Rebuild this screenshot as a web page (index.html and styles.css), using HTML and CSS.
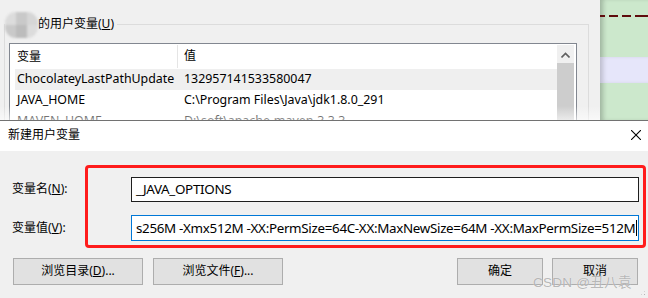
FILE: index.html
```html
<!DOCTYPE html>
<html>
<head>
	<meta charset="utf-8">
	<title>新建用户变量</title>
	<link rel="stylesheet" href="styles.css">
</head>
<body>
	<div class="back">
		<div class="envwin">
			<div class="group">
				<div class="legend">
					<div class="blob">
						<i class="g1"></i><i class="g2"></i><i class="g3"></i>
						<i class="g2"></i><i class="g4"></i><i class="g1"></i>
					</div>
					<span class="legendText">的用户变量(<u>U</u>)</span>
				</div>
				<div class="list">
					<div class="listMain">
						<div class="row head"><span class="c1">变量</span><span class="c2">值</span></div>
						<div class="row sel"><span class="c1">ChocolateyLastPathUpdate</span><span class="c2">132957141533580047</span></div>
						<div class="row"><span class="c1">JAVA_HOME</span><span class="c2">C:\Program Files\Java\jdk1.8.0_291</span></div>
						<div class="row"><span class="c1">MAVEN_HOME</span><span class="c2">D:\soft\apache-maven-3.3.3</span></div>
					</div>
					<div class="vscroll">
						<div class="arrow">
							<svg width="9" height="6" viewBox="0 0 9 6"><path d="M0.5 5.5 L4.5 1.5 L8.5 5.5" fill="none" stroke="#606060" stroke-width="1.6"/></svg>
						</div>
						<div class="thumb"></div>
					</div>
				</div>
			</div>
		</div>
		<div class="side">
			<div class="dash"></div>
			<div class="band"></div>
		</div>
	</div>

	<div class="dialog">
		<div class="titlebar">
			<span class="title">新建用户变量</span>
			<svg class="close" width="10" height="10" viewBox="0 0 10 10"><path d="M0 0 L10 10 M10 0 L0 10" stroke="#000" stroke-width="1.1"/></svg>
		</div>
		<div class="dlgBody">
			<div class="field">
				<label class="lbl">变量名(<u>N</u>):</label>
				<div class="box">_JAVA_OPTIONS</div>
			</div>
			<div class="field">
				<label class="lbl">变量值(<u>V</u>):</label>
				<div class="box focus"><span class="val">s256M -Xmx512M -XX:PermSize=64C-XX:MaxNewSize=64M -XX:MaxPermSize=512M</span><span class="caret"></span></div>
			</div>
			<div class="btns">
				<div class="btnLeft">
					<a class="btn wide" href="javascript:void(0)">浏览目录(<u>D</u>)...</a>
					<a class="btn wide" href="javascript:void(0)">浏览文件(<u>F</u>)...</a>
				</div>
				<div class="btnRight">
					<a class="btn" href="javascript:void(0)">确定</a>
					<a class="btn" href="javascript:void(0)">取消</a>
				</div>
			</div>
			<div class="mark"></div>
			<div class="watermark">CSDN @丑八袁</div>
			<div class="grip"></div>
		</div>
	</div>
</body>
</html>
```

FILE: styles.css
```css
*{
	margin: 0;
	padding: 0;
	box-sizing: border-box;
}
body{
	width: 648px;
	height: 298px;
	overflow: hidden;
	background: #f0f0f0;
	font: 12px/1.2 "Noto Sans", "Noto Sans CJK SC", sans-serif;
	color: #000;
}
a{
	color: #000;
	text-decoration: none;
}
u{
	text-underline-offset: 1px;
}

/* window behind the dialog */
.back{
	display: flex;
	height: 120px;
	overflow: hidden;
}
.envwin{
	position: relative;
	width: 600px;
	padding-top: 24px;
	background: #f0f0f0;
}
.envwin:after{
	content: "";
	position: absolute;
	left: 0;
	right: 0;
	bottom: 0;
	height: 14px;
	background: linear-gradient(rgba(255,255,255,0), rgba(255,255,255,0.6));
}
.group{
	margin-left: 4px;
	width: 585px;
	height: 110px;
	border: 1px solid #dcdcdc;
	border-bottom: none;
}
.legend{
	display: flex;
	align-items: center;
	width: max-content;
	height: 25px;
	margin-top: -13px;
	padding-right: 3px;
	background: #f0f0f0;
}
.blob{
	display: grid;
	grid-template-columns: repeat(3, 11px);
	grid-template-rows: repeat(2, 13px);
	width: 33px;
	height: 26px;
	border-radius: 11px;
	overflow: hidden;
	filter: blur(1.2px);
}
.blob .g1{ background: #dcdcdc; }
.blob .g2{ background: #c9c9c9; }
.blob .g3{ background: #d6d6d6; }
.blob .g4{ background: #bcbcbc; }
.legendText{
	font-size: 12px;
}
.list{
	display: flex;
	margin: 6px 0 0 4px;
	width: 568px;
	height: 90px;
	border: 1px solid #828790;
	border-bottom: none;
	background: #fff;
	padding-right: 2px;
}
.listMain{
	flex: 1;
	padding-left: 5px;
}
.row{
	display: flex;
	align-items: center;
	height: 21px;
	font-size: 12.4px;
}
.row.head{
	height: 25px;
	font-size: 12px;
}
.row.sel{
	background: #efefef;
}
.c1{
	width: 163px;
	padding-left: 2px;
	white-space: nowrap;
}
.c2{
	padding-left: 6px;
	white-space: nowrap;
}
.head .c1{
	height: 23px;
	line-height: 23px;
	border-right: 1px solid #e5e5e5;
}
.vscroll{
	width: 17px;
	padding-top: 1px;
	background: #f0f0f0;
	margin-top: 1px;
}
.arrow{
	display: flex;
	justify-content: center;
	align-items: center;
	height: 17px;
}
.thumb{
	height: 80px;
	background: #cdcdcd;
}
.side{
	position: relative;
	flex: 1;
	background: #cce8cc;
	box-shadow: inset 5px 0 5px -2px rgba(0,0,0,0.22);
}
.dash{
	margin-top: 15px;
	height: 2px;
	background: repeating-linear-gradient(to right, #5e0c0c 0 9px, transparent 9px 13px);
	background-position: -4px 0;
}
.band{
	margin-top: 40px;
	height: 26px;
	background: #e6e6fa;
	box-shadow: inset 5px 0 5px -2px rgba(0,0,0,0.18);
}

/* dialog */
.dialog{
	height: 178px;
	border-top: 1px solid #727272;
}
.titlebar{
	display: flex;
	align-items: center;
	justify-content: space-between;
	height: 30px;
	padding: 0 7px 0 8px;
	background: #fff;
}
.title{
	font-size: 12px;
	margin-top: -1px;
}
.close{
	margin-top: -2px;
}
.dlgBody{
	position: relative;
	height: 147px;
	padding: 26px 0 0 12px;
}
.field{
	display: flex;
	align-items: center;
	margin-bottom: 13px;
}
.lbl{
	width: 119px;
	font-size: 12px;
}
.box{
	display: flex;
	align-items: center;
	width: 508px;
	height: 25px;
	padding-left: 4px;
	border: 1px solid #1e1e1e;
	background: #fff;
	font-size: 13.4px;
	letter-spacing: -0.32px;
	white-space: nowrap;
	overflow: hidden;
}
.box.focus{
	height: 26px;
	border-color: #0078d7;
}
.caret{
	flex: none;
	width: 1px;
	height: 16px;
	background: #000;
	margin-left: 1px;
}
.btns{
	display: flex;
	justify-content: space-between;
	margin: 17px 10px 0 1px;
}
.btnLeft, .btnRight{
	display: flex;
	gap: 9px;
}
.btnLeft{
	gap: 10px;
}
.btn{
	display: flex;
	align-items: center;
	justify-content: center;
	width: 86px;
	height: 27px;
	background: #e1e1e1;
	border: 1px solid #adadad;
	font-size: 12px;
}
.btn.wide{
	width: 130px;
}
.mark{
	position: absolute;
	left: 85px;
	top: 14px;
	width: 561px;
	height: 83px;
	border: 3px solid #ff1c1c;
	border-radius: 4px;
}
.watermark{
	position: absolute;
	left: 533px;
	top: 120px;
	font: 13.6px "Liberation Sans", "Noto Sans CJK SC", sans-serif;
	letter-spacing: 0.2px;
	color: rgba(125,125,125,0.55);
	text-shadow: 0 0 1px rgba(255,255,255,0.9);
	white-space: nowrap;
}
.grip{
	position: absolute;
	right: 2px;
	bottom: 2px;
	width: 6px;
	height: 6px;
	background: radial-gradient(circle, #b5b5b5 0.8px, transparent 1px) 0 0 / 3px 3px;
	clip-path: polygon(100% 0, 100% 100%, 0 100%);
}
```
